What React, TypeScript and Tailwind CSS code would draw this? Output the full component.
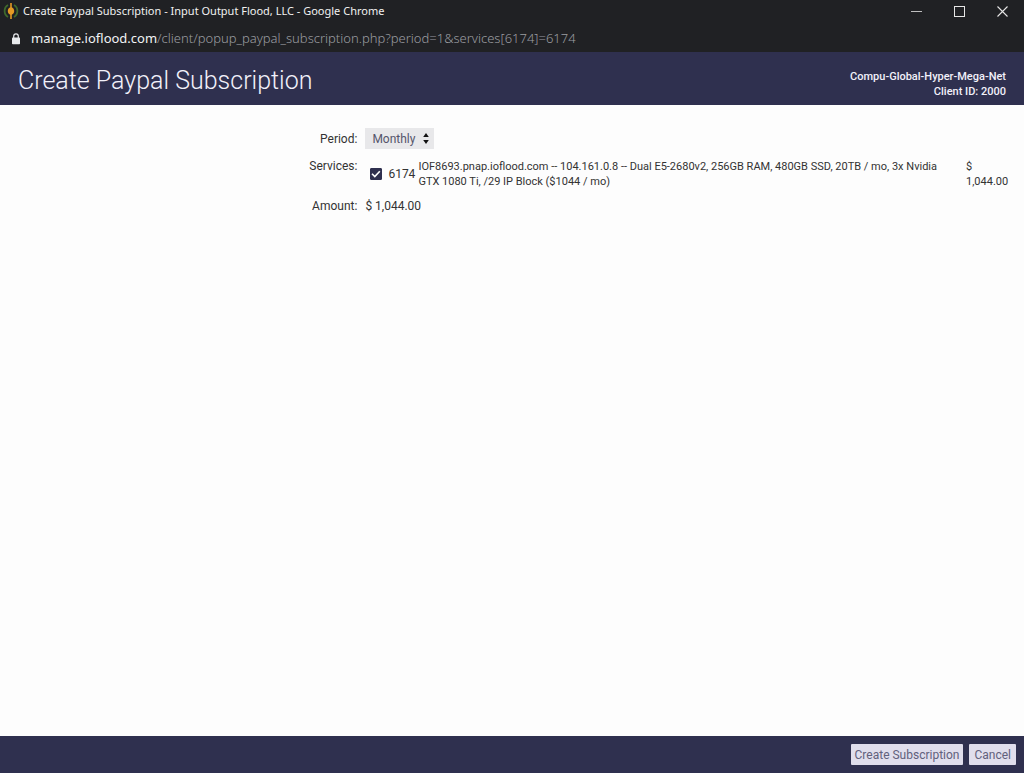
import { useState } from "react";

function FlameLogo() {
  return (
    <svg viewBox="0 0 16 18" className="h-[18px] w-4" aria-hidden="true">
      <path d="M5 3C0.500 5.500 0.500 12.500 5 15" fill="none" stroke="#3f6a2c" strokeWidth="1.800" />
      <path d="M11 3C15.500 5.500 15.500 12.500 11 15" fill="none" stroke="#3f6a2c" strokeWidth="1.800" />
      <path d="M7.200 1h1.600v4.200C10.400 6 11.200 7.400 11.200 9s-0.800 3-2.400 3.800V17H7.200v-4.200C5.600 12 4.800 10.600 4.800 9s0.800-3 2.400-3.800Z" fill="#e59a24" />
    </svg>
  );
}

function LockIcon() {
  return (
    <svg viewBox="0 0 10 12" className="h-3 w-[10px]" aria-hidden="true">
      <path d="M2.700 5V3.200a2.300 2.300 0 0 1 4.600 0V5" fill="none" stroke="#e8eaed" strokeWidth="1.200" />
      <rect x="1" y="4.600" width="8" height="6.600" rx="0.800" fill="#e8eaed" />
    </svg>
  );
}

function WindowControls() {
  return (
    <div className="flex items-center gap-8 pr-4 text-[#e6e6e6]">
      <button type="button" aria-label="Minimize">
        <svg viewBox="0 0 11 11" className="size-[11px]" aria-hidden="true">
          <path d="M0 5.500h11" stroke="currentColor" strokeOpacity="0.800" />
        </svg>
      </button>
      <button type="button" aria-label="Maximize">
        <svg viewBox="0 0 11 11" className="size-[11px]" aria-hidden="true">
          <rect x="0.500" y="0.500" width="10" height="10" fill="none" stroke="currentColor" />
        </svg>
      </button>
      <button type="button" aria-label="Close">
        <svg viewBox="0 0 11 11" className="size-[11px]" aria-hidden="true">
          <path d="M0.500 0.500l10 10M10.500 0.500l-10 10" stroke="currentColor" strokeWidth="1.100" />
        </svg>
      </button>
    </div>
  );
}

export default function App() {
  const [period, setPeriod] = useState("Monthly");
  const [selected, setSelected] = useState(true);

  return (
    <div className="flex min-h-screen flex-col bg-[#fdfdfd] font-['Roboto',sans-serif] text-xs text-[#333]">
      <div className="bg-[#202124] font-['Noto_Sans',sans-serif]">
        <div className="flex h-[22px] items-center justify-between pl-[3px]">
          <div className="flex items-center gap-1 text-[11px] text-[#f1f1f1]">
            <FlameLogo />
            <span>Create Paypal Subscription - Input Output Flood, LLC - Google Chrome</span>
          </div>
          <WindowControls />
        </div>
        <div className="flex h-[30px] items-center gap-[10px] pt-1 pl-[11px] text-[13px] text-[#9b9da1]">
          <LockIcon />
          <span className="font-light">
            <span className="font-normal text-[#f1f3f4]">manage.ioflood.com</span>
            /client/popup_paypal_subscription.php?period=1&amp;services[6174]=6174
          </span>
        </div>
      </div>

      <header className="flex h-[53px] items-center justify-between bg-[#2f304f] px-[18px] text-[#f2f1fa]">
        <h1 className="pt-[5px] text-[25px] font-light">Create Paypal Subscription</h1>
        <div className="pt-[10px] text-right text-[11px] leading-[15px] font-medium">
          <p>Compu-Global-Hyper-Mega-Net</p>
          <p>Client ID: 2000</p>
        </div>
      </header>

      <main className="grid flex-1 grid-cols-[35%_1fr] content-start gap-x-[7px] pt-[23px]">
        <label htmlFor="period" className="flex h-[21px] items-center justify-end pr-px">Period:</label>
        <div className="relative flex h-[21px] w-[69px] items-center">
          <select
            id="period"
            value={period}
            onChange={(e) => setPeriod(e.target.value)}
            className="h-full w-full appearance-none bg-[#e8e8ea] pl-[7px] text-[#55556a]"
          >
            <option>Monthly</option>
            <option>Quarterly</option>
            <option>Annually</option>
          </select>
          <svg viewBox="0 0 6 11" className="pointer-events-none absolute right-[5px] h-[11px] w-[6px]" aria-hidden="true">
            <path d="M3 0l2.800 4h-5.600zM3 11l2.800-4h-5.600z" fill="#111" />
          </svg>
        </div>

        <div className="pt-[10px] pr-px text-right leading-[15px]">Services:</div>
        <div className="flex items-center pt-[10px] pr-[14px] pl-[5px] leading-[15px]">
          <span className="relative flex size-3 shrink-0">
            <input
              id="service-6174"
              type="checkbox"
              checked={selected}
              onChange={(e) => setSelected(e.target.checked)}
              className="peer size-3 appearance-none rounded-[1px] border border-[#2f304f] checked:bg-[#2f304f]"
            />
            <svg viewBox="0 0 12 12" className="pointer-events-none absolute inset-0 hidden size-3 peer-checked:block" aria-hidden="true">
              <path d="M2 5.800l2.800 2.800 5-5.400" fill="none" stroke="#fff" strokeWidth="1.600" />
            </svg>
          </span>
          <label htmlFor="service-6174" className="ml-[6px] w-[30px] shrink-0">6174</label>
          <p className="flex-1 pr-5 text-[11px]">
            IOF8693.pnap.ioflood.com -- 104.161.0.8 -- Dual E5-2680v2, 256GB RAM, 480GB SSD, 20TB / mo, 3x Nvidia GTX 1080 Ti, /29 IP Block ($1044 / mo)
          </p>
          <p className="w-11 shrink-0 text-[11px]">$ 1,044.00</p>
        </div>

        <div className="pt-[10px] pr-px text-right leading-[15px]">Amount:</div>
        <div className="pt-[10px] leading-[15px]">$ 1,044.00</div>
      </main>

      <footer className="flex h-[37px] items-center justify-end gap-[6px] bg-[#2f304f] pr-2">
        <button type="button" className="h-[21px] rounded-[1px] bg-[#e0deec] px-1 text-[#62617c]">Create Subscription</button>
        <button type="button" className="h-[21px] rounded-[1px] bg-[#e0deec] px-[5px] text-[#62617c]">Cancel</button>
      </footer>
    </div>
  );
}
